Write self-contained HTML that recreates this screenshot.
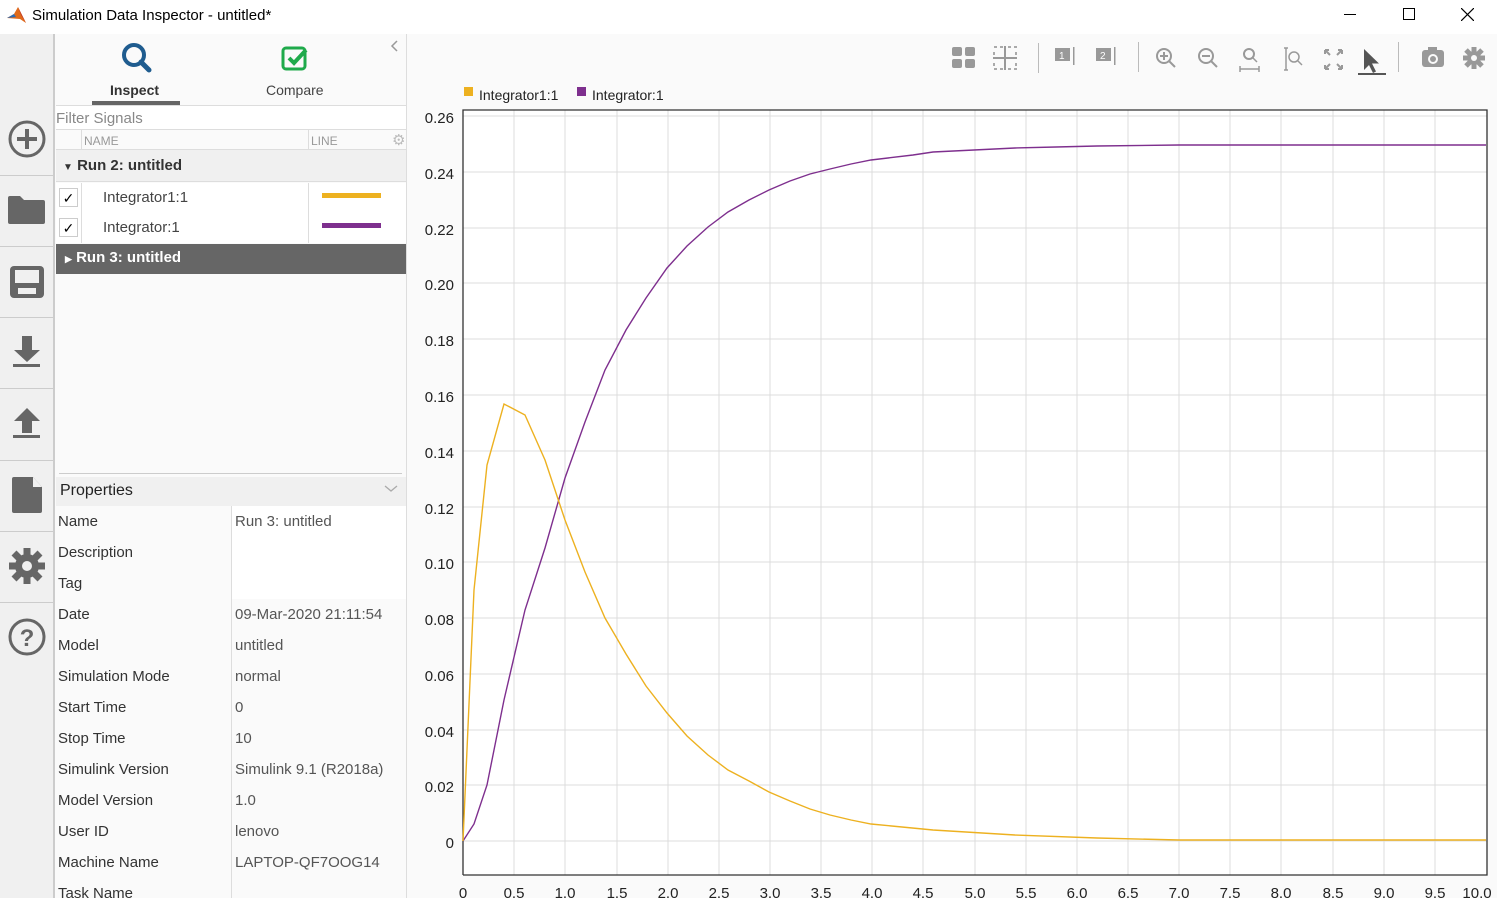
<!DOCTYPE html>
<html><head><meta charset="utf-8"><style>
*{margin:0;padding:0;box-sizing:border-box}
html{width:1497px;height:898px;overflow:hidden}
body{width:1497px;height:898px;overflow:hidden;background:#fafafa;font-family:"Liberation Sans",Arial,sans-serif;position:relative;color:#333}
.a{position:absolute}
.t{font-size:14px;white-space:nowrap}
</style></head><body>
<div class="a" style="left:0;top:0;width:1497px;height:34px;background:#fff"></div>
<svg class="a" style="left:6px;top:5px" width="22" height="20" viewBox="0 0 22 20"><path d="M1 13 L8 9 L12 2 L20 18 L14 14 Z" fill="#e06a1a"/><path d="M1 13 L8 9 L10 12 Z" fill="#2a6bb5"/><path d="M12 2 L20 18 L15 10Z" fill="#c0392b"/></svg>
<div class="a t" style="left:32px;top:7px;font-size:15px;color:#000">Simulation Data Inspector - untitled*</div>
<div class="a" style="left:1344px;top:14px;width:12px;height:1px;background:#000"></div>
<div class="a" style="left:1403px;top:8px;width:12px;height:12px;border:1px solid #000"></div>
<svg class="a" style="left:1461px;top:8px" width="13" height="13"><path d="M0 0L13 13M13 0L0 13" stroke="#000" stroke-width="1.2"/></svg>

<div class="a" style="left:0;top:34px;width:55px;height:864px;background:#f0f0f0;border-right:2px solid #ccc"></div>
<div class="a" style="left:0;top:175px;width:54px;height:1px;background:#ccc"></div>
<div class="a" style="left:0;top:246px;width:54px;height:1px;background:#ccc"></div>
<div class="a" style="left:0;top:317px;width:54px;height:1px;background:#ccc"></div>
<div class="a" style="left:0;top:388px;width:54px;height:1px;background:#ccc"></div>
<div class="a" style="left:0;top:460px;width:54px;height:1px;background:#ccc"></div>
<div class="a" style="left:0;top:531px;width:54px;height:1px;background:#ccc"></div>
<div class="a" style="left:0;top:602px;width:54px;height:1px;background:#ccc"></div>
<svg class="a" style="left:0;top:0" width="55" height="898">
<g fill="#666" stroke="#666">
<circle cx="27" cy="139" r="17" fill="none" stroke-width="3"/><path d="M27 129v20M17 139h20" stroke-width="4" fill="none"/>
<path d="M10 196h10l4 4h19a2 2 0 0 1 2 2v20a2 2 0 0 1-2 2H10a2 2 0 0 1-2-2V198a2 2 0 0 1 2-2z" stroke="none"/>
<rect x="10" y="266" width="34" height="32" rx="4" stroke="none"/><rect x="15" y="270" width="24" height="13" fill="#f0f0f0" stroke="none"/><rect x="18" y="288" width="18" height="6" fill="#f0f0f0" stroke="none"/>
<path d="M22 336h10v14h8l-13 12-13-12h8z" stroke="none"/><rect x="13" y="364" width="27" height="3" stroke="none"/>
<path d="M27 408l13 13h-8v12h-10v-12h-8z" stroke="none"/><rect x="13" y="435" width="27" height="3" stroke="none"/>
<path d="M14 477h19l9 10v24a2 2 0 0 1-2 2H14a2 2 0 0 1-2-2V479a2 2 0 0 1 2-2z" stroke="none"/>
<path d="M33 477v10h9z" fill="#f0f0f0" stroke="none"/>
<circle cx="27" cy="566" r="12" stroke="none"/>
<g stroke-width="7"><path d="M27 548v36M9 566h36M14 553l26 26M40 553l-26 26"/></g>
<circle cx="27" cy="566" r="5" fill="#f0f0f0" stroke="none"/>
<circle cx="27" cy="637" r="17" fill="none" stroke-width="3"/>
</g>
<text x="27" y="646" font-size="24" font-weight="bold" fill="#666" text-anchor="middle" font-family="Liberation Sans">?</text>
</svg>

<div class="a" style="left:56px;top:34px;width:350px;height:72px;background:#fafafa;border-bottom:1px solid #ddd"></div>
<svg class="a" style="left:118px;top:40px" width="36" height="36"><circle cx="16" cy="15" r="10" fill="none" stroke="#1f5c8f" stroke-width="4"/><path d="M23 22l8 8" stroke="#1f5c8f" stroke-width="5" stroke-linecap="round"/></svg>
<div class="a t" style="left:110px;top:82px;font-weight:bold;color:#333">Inspect</div>
<div class="a" style="left:92px;top:101px;width:88px;height:4px;background:#666"></div>
<svg class="a" style="left:281px;top:44px" width="30" height="28"><rect x="2" y="4" width="22" height="21" rx="3" fill="none" stroke="#1faa4b" stroke-width="3"/><path d="M8 14l5 5 12-13" fill="none" stroke="#1faa4b" stroke-width="4"/></svg>
<div class="a t" style="left:266px;top:82px;color:#444">Compare</div>
<svg class="a" style="left:390px;top:40px" width="10" height="12"><path d="M7 1L2 6l5 5" fill="none" stroke="#999" stroke-width="1.5"/></svg>
<div class="a" style="left:56px;top:106px;width:350px;height:24px;background:#fff;border-bottom:1px solid #ddd"></div>
<div class="a t" style="left:56px;top:110px;font-size:15px;color:#888">Filter Signals</div>
<div class="a" style="left:56px;top:130px;width:350px;height:20px;background:#fafafa;border-bottom:1px solid #ddd"></div>
<div class="a" style="left:81px;top:130px;width:1px;height:20px;background:#ddd"></div>
<div class="a" style="left:308px;top:130px;width:1px;height:20px;background:#ddd"></div>
<div class="a t" style="left:84px;top:134px;font-size:12px;color:#999">NAME</div>
<div class="a t" style="left:311px;top:134px;font-size:12px;color:#999">LINE</div>
<div class="a" style="left:392px;top:131px;font-size:15px;color:#bbb">⚙</div>
<div class="a" style="left:56px;top:150px;width:350px;height:32px;background:#f0f0f0;border-bottom:1px solid #ddd"></div>
<div class="a t" style="left:63px;top:157px;font-weight:bold;font-size:15px;color:#333"><span style="font-size:10px">▼</span> Run 2: untitled</div>
<div class="a" style="left:56px;top:183px;width:350px;height:60px;background:#fff"></div>
<div class="a" style="left:81px;top:183px;width:1px;height:60px;background:#ddd"></div>
<div class="a" style="left:308px;top:183px;width:1px;height:60px;background:#ddd"></div>
<div class="a" style="left:59px;top:188px;width:19px;height:19px;border:1px solid #ccc;background:#fff;font-size:14px;text-align:center;line-height:18px;color:#000">✓</div>
<div class="a" style="left:59px;top:218px;width:19px;height:19px;border:1px solid #ccc;background:#fff;font-size:14px;text-align:center;line-height:18px;color:#000">✓</div>
<div class="a t" style="left:103px;top:189px;font-size:15px;color:#444">Integrator1:1</div>
<div class="a t" style="left:103px;top:219px;font-size:15px;color:#444">Integrator:1</div>
<div class="a" style="left:322px;top:193px;width:59px;height:5px;background:#edb120"></div>
<div class="a" style="left:322px;top:223px;width:59px;height:5px;background:#7e2f8e"></div>
<div class="a" style="left:56px;top:244px;width:350px;height:30px;background:#666"></div>
<div class="a t" style="left:65px;top:249px;font-weight:bold;font-size:15px;color:#fff"><span style="font-size:9px">▶</span> Run 3: untitled</div>
<div class="a" style="left:59px;top:473px;width:343px;height:1px;background:#ccc"></div>
<div class="a" style="left:56px;top:477px;width:350px;height:29px;background:#f0f0f0"></div>
<div class="a t" style="left:60px;top:482px;font-size:16px;color:#222">Properties</div>
<svg class="a" style="left:384px;top:484px" width="14" height="10"><path d="M1 2l6 5 6-5" fill="none" stroke="#aaa" stroke-width="1.3"/></svg>
<div class="a" style="left:232px;top:506px;width:174px;height:93px;background:#fff"></div>
<div class="a" style="left:231px;top:506px;width:1px;height:392px;background:#ddd"></div>
<div class="a" style="left:406px;top:34px;width:1px;height:864px;background:#ddd"></div>
<div class="a t" style="left:58px;top:506px;font-size:15px;color:#333;line-height:31px">Name<br>Description<br>Tag<br>Date<br>Model<br>Simulation Mode<br>Start Time<br>Stop Time<br>Simulink Version<br>Model Version<br>User ID<br>Machine Name<br>Task Name</div>
<div class="a t" style="left:235px;top:506px;font-size:15px;color:#555;line-height:31px">Run 3: untitled<br>&nbsp;<br>&nbsp;<br>09-Mar-2020 21:11:54<br>untitled<br>normal<br>0<br>10<br>Simulink 9.1 (R2018a)<br>1.0<br>lenovo<br>LAPTOP-QF7OOG14</div>

<svg class="a" style="left:940px;top:38px" width="557" height="40">
<g fill="#999">
<rect x="12" y="9" width="10" height="9" rx="2"/><rect x="25" y="9" width="10" height="9" rx="2"/><rect x="12" y="21" width="10" height="9" rx="2"/><rect x="25" y="21" width="10" height="9" rx="2"/>
<path d="M65 8v24M53 20h24" stroke="#999" stroke-width="2"/>
<path d="M54 9h3M60 9h3M68 9h3M74 9h3M54 31h3M60 31h3M68 31h3M74 31h3M54 14v3M76 14v3M54 25v3M76 25v3" stroke="#aaa" stroke-width="2"/>
<rect x="115" y="10" width="15" height="13"/><text x="119" y="21" font-size="10" fill="#fff" font-family="Liberation Sans">1</text><rect x="133" y="9" width="1.5" height="18"/>
<rect x="156" y="10" width="15" height="13"/><text x="160" y="21" font-size="10" fill="#fff" font-family="Liberation Sans">2</text><rect x="174" y="9" width="1.5" height="18"/>
<rect x="98" y="5" width="1" height="30" fill="#bbb"/><rect x="198" y="4" width="1" height="30" fill="#bbb"/><rect x="458" y="4" width="1" height="30" fill="#bbb"/>
</g>
<g fill="none" stroke="#999" stroke-width="2">
<circle cx="224" cy="18" r="7"/><path d="M229 23l6 6M224 14v8M220 18h8"/>
<circle cx="266" cy="18" r="7"/><path d="M271 23l6 6M262 18h8"/>
<circle cx="309" cy="16" r="5"/><path d="M313 20l4 4M300 31h19M300 28v6M319 28v6" stroke-width="1.5"/>
<path d="M344 10h4M346 10v22M344 32h4" stroke-width="1.5"/><circle cx="354" cy="19" r="5" stroke-width="1.5"/><path d="M358 23l4 4" stroke-width="1.5"/>
<path d="M385 12l5 5M385 12h4M385 12v4M402 12l-5 5M402 12h-4M402 12v4M385 31l5-5M385 31h4M385 31v-4M402 31l-5-5M402 31h-4M402 31v-4"/>
</g>
<path d="M424 11l0 21l5-5l4 8l3-1.5l-4-8h7z" fill="#555"/><rect x="418" y="35" width="28" height="2" fill="#555"/>
<rect x="482" y="12" width="22" height="17" rx="3" fill="#999"/><rect x="488" y="9" width="9" height="4" fill="#999"/><circle cx="493" cy="21" r="5" fill="#fafafa"/><circle cx="493" cy="21" r="3" fill="#999"/>
<circle cx="534" cy="20" r="7" fill="#999"/><g stroke="#999" stroke-width="5"><path d="M534 9v22M523 20h22M526 12l16 16M542 12l-16 16"/></g><circle cx="534" cy="20" r="3" fill="#fafafa"/>
</svg>

<svg class="a" style="left:0;top:0" width="1497" height="898" font-family="Liberation Sans">
<rect x="464" y="87" width="9" height="9" fill="#edb120"/><text x="479" y="100" font-size="14" fill="#222">Integrator1:1</text>
<rect x="577" y="87" width="9" height="9" fill="#7e2f8e"/><text x="592" y="100" font-size="14" fill="#222">Integrator:1</text>
<rect x="463" y="110" width="1024" height="765" fill="#fff"/>
<g stroke="#dcdcdc" stroke-width="1">
<path d="M514 110v765M565 110v765M617 110v765M668 110v765M719 110v765M770 110v765M821 110v765M872 110v765M923 110v765M975 110v765M1026 110v765M1077 110v765M1128 110v765M1179 110v765M1230 110v765M1281 110v765M1333 110v765M1384 110v765M1435 110v765"/>
<path d="M463 116h1024M463 172h1024M463 228h1024M463 283h1024M463 339h1024M463 395h1024M463 451h1024M463 507h1024M463 562h1024M463 618h1024M463 674h1024M463 730h1024M463 785h1024M463 841h1024"/>
</g>
<path d="M463 875V110H1487V875H463" fill="none" stroke="#333" stroke-width="1.3"/>
<g font-size="15" fill="#222" text-anchor="end">
<text x="454" y="123">0.26</text><text x="454" y="179">0.24</text><text x="454" y="235">0.22</text><text x="454" y="290">0.20</text><text x="454" y="346">0.18</text><text x="454" y="402">0.16</text><text x="454" y="458">0.14</text><text x="454" y="514">0.12</text><text x="454" y="569">0.10</text><text x="454" y="625">0.08</text><text x="454" y="681">0.06</text><text x="454" y="737">0.04</text><text x="454" y="792">0.02</text><text x="454" y="848">0</text>
</g>
<g font-size="15" fill="#222" text-anchor="middle">
<text x="463" y="898">0</text><text x="514" y="898">0.5</text><text x="565" y="898">1.0</text><text x="617" y="898">1.5</text><text x="668" y="898">2.0</text><text x="719" y="898">2.5</text><text x="770" y="898">3.0</text><text x="821" y="898">3.5</text><text x="872" y="898">4.0</text><text x="923" y="898">4.5</text><text x="975" y="898">5.0</text><text x="1026" y="898">5.5</text><text x="1077" y="898">6.0</text><text x="1128" y="898">6.5</text><text x="1179" y="898">7.0</text><text x="1230" y="898">7.5</text><text x="1281" y="898">8.0</text><text x="1333" y="898">8.5</text><text x="1384" y="898">9.0</text><text x="1435" y="898">9.5</text><text x="1477" y="898">10.0</text>
</g>
<polyline fill="none" stroke="#7e2f8e" stroke-width="1.4" points="463,841 474,824 487,785 504,700 525,610 545,548 565,478 585,422 605,370 626,330 646,298 667,268 687,246 708,227 728,212 749,200 769,190 790,181 810,174 830,169 851,164 871,160 913,155 933,152 974,150 1015,148 1056,147 1097,146 1179,145 1486,145"/>
<polyline fill="none" stroke="#edb120" stroke-width="1.4" points="463,841 474,590 487,465 504,404 525,415 545,460 565,520 585,572 605,618 626,654 646,686 667,713 687,736 708,755 728,770 749,781 769,792 790,801 810,809 830,815 851,820 871,824 933,830 1015,835 1097,838 1179,840 1486,840"/>
</svg>
</body></html>
